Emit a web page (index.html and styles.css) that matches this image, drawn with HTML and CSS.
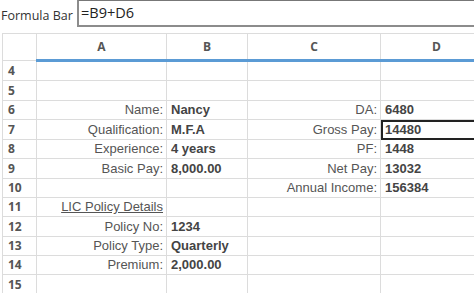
FILE: index.html
```html
<!DOCTYPE HTML>
<html>
<head>
  <title>Salary Sheet</title>
  <meta name="viewport" content="width=device-width, initial-scale=1">
  <link rel="stylesheet" href="styles.css">
</head>
<body>
  <div class="formula-bar">
    <span class="formula-label">Formula Bar</span>
    <div class="formula-input">=B9+D6</div>
  </div>
  <table class="sheet">
    <colgroup>
      <col class="col-num">
      <col class="col-a">
      <col class="col-b">
      <col class="col-c">
      <col class="col-d">
    </colgroup>
    <thead>
      <tr>
        <th class="corner"></th>
        <th>A</th>
        <th>B</th>
        <th>C</th>
        <th>D</th>
      </tr>
    </thead>
    <tbody>
      <tr class="r20"><td class="num">4</td><td></td><td></td><td></td><td></td></tr>
      <tr class="r20"><td class="num">5</td><td></td><td></td><td></td><td></td></tr>
      <tr class="r19"><td class="num">6</td><td class="label">Name:</td><td class="value">Nancy</td><td class="label">DA:</td><td class="value">6480</td></tr>
      <tr class="r20"><td class="num">7</td><td class="label">Qualification:</td><td class="value">M.F.A</td><td class="label">Gross Pay:</td><td class="value selected">14480</td></tr>
      <tr class="r19"><td class="num">8</td><td class="label">Experience:</td><td class="value">4 years</td><td class="label">PF:</td><td class="value">1448</td></tr>
      <tr class="r20"><td class="num">9</td><td class="label">Basic Pay:</td><td class="value">8,000.00</td><td class="label">Net Pay:</td><td class="value">13032</td></tr>
      <tr class="r19"><td class="num">10</td><td></td><td></td><td class="label">Annual Income:</td><td class="value">156384</td></tr>
      <tr class="r19"><td class="num">11</td><td class="label"><u>LIC Policy Details</u></td><td></td><td></td><td></td></tr>
      <tr class="r20"><td class="num">12</td><td class="label">Policy No:</td><td class="value">1234</td><td></td><td></td></tr>
      <tr class="r19"><td class="num">13</td><td class="label">Policy Type:</td><td class="value">Quarterly</td><td></td><td></td></tr>
      <tr class="r19"><td class="num">14</td><td class="label">Premium:</td><td class="value">2,000.00</td><td></td><td></td></tr>
      <tr class="r20"><td class="num">15</td><td></td><td></td><td></td><td></td></tr>
    </tbody>
  </table>
</body>
</html>
```

FILE: styles.css
```css
html, body {
  margin: 0;
  overflow: hidden;
  background-color: white;
}
.formula-bar {
  display: flex;
  align-items: center;
  height: 28px;
  margin-top: -1px;
}
.formula-label {
  width: 77px;
  padding-left: 1px;
  padding-top: 4px;
  box-sizing: border-box;
  font-family: "Open Sans", sans-serif;
  font-size: 12.5px;
  color: #333;
}
.formula-input {
  flex: 1;
  height: 28px;
  box-sizing: border-box;
  border: 2px solid #8c8c8c;
  border-top-color: #777;
  border-right: none;
  padding-left: 2px;
  font-family: "Open Sans", sans-serif;
  font-size: 14.5px;
  line-height: 23px;
  color: #222;
}
.sheet {
  margin-top: 6px;
  margin-left: 2px;
  border-collapse: collapse;
  table-layout: fixed;
  width: 490px;
}
.col-num { width: 34px; }
.col-a { width: 130px; }
.col-b { width: 81px; }
.col-c { width: 133px; }
.col-d { width: 112px; }
.sheet th, .sheet td {
  border: 1px solid #dcdcdc;
  padding: 0;
  overflow: hidden;
  white-space: nowrap;
}
.sheet th {
  height: 25px;
  font-family: "Open Sans", sans-serif;
  font-size: 12px;
  font-weight: bold;
  color: #555;
  text-align: center;
  border-bottom: 3px solid #5b9bd5;
}
.sheet th.corner {
  border-bottom: 1px solid #dcdcdc;
}
.r20 { height: 20px; }
.r19 { height: 19px; }
.sheet td {
  font-family: "Liberation Sans", Arial, sans-serif;
  font-size: 13px;
  line-height: 14px;
}
.sheet td.num {
  padding-left: 5px;
  font-family: "Open Sans", sans-serif;
  font-size: 12px;
  font-weight: bold;
  color: #555;
}
.sheet td.label {
  text-align: right;
  padding-right: 3px;
  color: #555;
}
.sheet td.value {
  padding-left: 4px;
  font-weight: bold;
  color: #444;
}
.sheet td.selected {
  outline: 2px solid #222;
  outline-offset: -2px;
}
```
